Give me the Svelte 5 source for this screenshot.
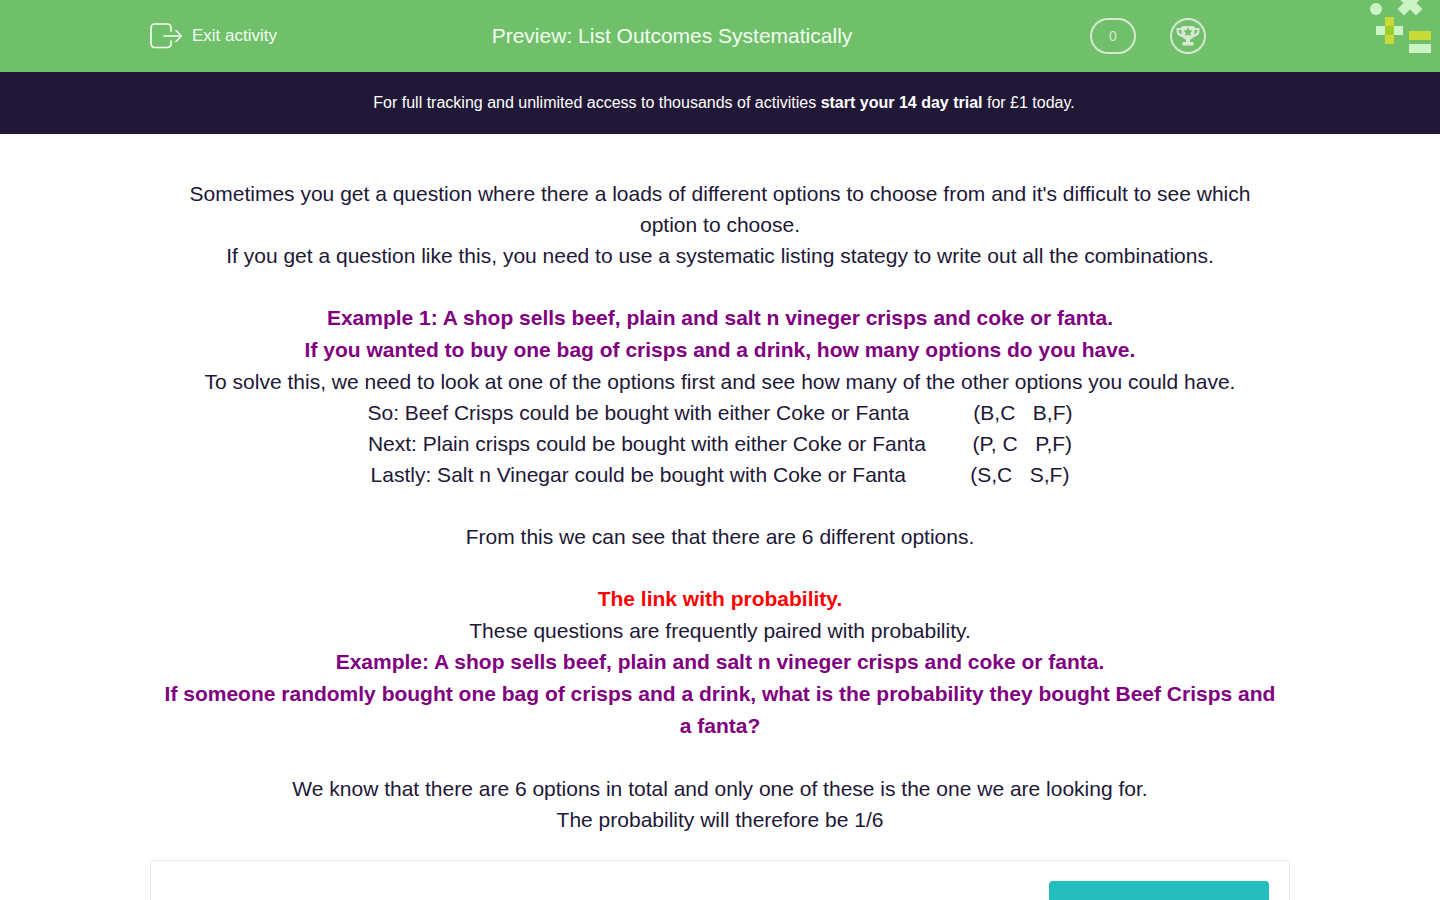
<script>
  const lines = [
    { text: "Sometimes you get a question where there a loads of different options to choose from and it's difficult to see which option to choose." },
    { text: 'If you get a question like this, you need to use a systematic listing stategy to write out all the combinations.' },
    { text: '' },
    { text: 'Example 1: A shop sells beef, plain and salt n vineger crisps and coke or fanta.', kind: 'example' },
    { text: 'If you wanted to buy one bag of crisps and a drink, how many options do you have.', kind: 'example' },
    { text: 'To solve this, we need to look at one of the options first and see how many of the other options you could have.' },
    { text: 'So: Beef Crisps could be bought with either Coke or Fanta           (B,C   B,F)' },
    { text: 'Next: Plain crisps could be bought with either Coke or Fanta        (P, C   P,F)' },
    { text: 'Lastly: Salt n Vinegar could be bought with Coke or Fanta           (S,C   S,F)' },
    { text: '' },
    { text: 'From this we can see that there are 6 different options.' },
    { text: '' },
    { text: 'The link with probability.', kind: 'link' },
    { text: 'These questions are frequently paired with probability.' },
    { text: 'Example: A shop sells beef, plain and salt n vineger crisps and coke or fanta.', kind: 'example' },
    { text: 'If someone randomly bought one bag of crisps and a drink, what is the probability they bought Beef Crisps and a fanta?', kind: 'example' },
    { text: '' },
    { text: 'We know that there are 6 options in total and only one of these is the one we are looking for.' },
    { text: 'The probability will therefore be 1/6' }
  ];
</script>

<header>
  <div class="container bar">
    <a class="exit" href="/activities">
      <svg width="32" height="26" viewBox="0 0 32 26" fill="none" stroke="currentColor" stroke-width="1.7" stroke-linecap="round" stroke-linejoin="round">
        <path d="M21 8V4.500a3.500 3.500 0 0 0-3.500-3.500H4.500A3.500 3.500 0 0 0 1 4.500v16.500A3.500 3.500 0 0 0 4.500 24.500h13a3.500 3.500 0 0 0 3.500-3.500V18" />
        <path d="M14 13h17M26 7.500l5.300 5.500L26 18.500" />
      </svg>
      Exit activity
    </a>
    <h1>Preview: List Outcomes Systematically</h1>
    <div class="stats">
      <span class="score">0</span>
      <button class="trophy" aria-label="Trophies">
        <svg width="24" height="24" viewBox="0 0 24 24">
          <path fill="currentColor" fill-rule="evenodd" d="M5.500 2h13v2h5v2.500c0 3.600-2.300 6-6 6.500-1 1.400-2 2.100-3.500 2.500v2.500h3.500v3.500H6.500V18H10v-2.500C8.500 15.100 7.500 14.400 6.500 13 2.800 12.500.5 10.100.5 6.500V4h5zM5.500 6h-3c.1 2.200 1.200 3.700 3.200 4.300zm13 0-.2 4.300c2-.6 3.100-2.100 3.200-4.300z" />
          <path fill="#70bf6b" d="m12 3.300 1.400 2.900 3.200.4-2.300 2.200.6 3.200-2.900-1.500L9.100 12l.6-3.200-2.300-2.200 3.200-.4z" />
        </svg>
      </button>
    </div>
  </div>
  <svg class="shapes" width="74" height="60" viewBox="0 0 74 60" aria-hidden="true">
    <g fill="#ccf3c4">
      <circle cx="10" cy="9" r="6" />
      <path d="M37.500 3 31.500 9l6.500 6.500L44 9.500l6 6L56.500 9 50.500 3l6-6L50-9.500l-6 6-6-6L31.500-3z" />
      <path d="M10 26h27v9H10zM43 44h22v9H43z" />
    </g>
    <path fill="#c9d935" d="M19 17h9v27h-9zM43 31h22v9H43z" />
    <path fill="#9fcf2c" d="M19 26h9v9h-9z" />
  </svg>
</header>

<p class="trial">
  For full tracking and unlimited access to thousands of activities <a href="/trial">start your 14 day trial</a> for £1 today.
</p>

<main class="container">
  <article>
    {#each lines as line}
      <p class={line.kind}>{line.text}</p>
    {/each}
  </article>
  <section class="card">
    <button class="start" aria-label="Start"></button>
  </section>
</main>

<style>
  :global(body) {
    background: #fff;
    color: #211737;
    font-family: "Liberation Sans", Arial, sans-serif;
  }

  .container {
    max-width: 1140px;
    margin: 0 auto;
  }

  header {
    position: relative;
    background: #70bf6b;
    color: #f3fff0;
  }

  .bar {
    display: grid;
    grid-template-columns: 132px 1fr 228px;
    align-items: center;
    min-height: 72px;
  }

  .exit {
    display: flex;
    align-items: center;
    gap: 10px;
    color: inherit;
    font-size: 17px;
    text-decoration: none;
    white-space: nowrap;
  }

  h1 {
    margin: 0;
    font-size: 21px;
    font-weight: 400;
    text-align: center;
  }

  .stats {
    display: flex;
    gap: 34px;
    padding-left: 28px;
    color: #d9e8d5;
  }

  .score,
  .trophy {
    display: flex;
    align-items: center;
    justify-content: center;
    box-sizing: border-box;
    height: 36px;
    border: 2px solid currentColor;
    border-radius: 18px;
    background: none;
    color: inherit;
  }

  .score {
    width: 46px;
    font-size: 14px;
  }

  .trophy {
    width: 36px;
    padding: 0;
    cursor: pointer;
  }

  .shapes {
    position: absolute;
    top: 0;
    right: 0;
  }

  .trial {
    margin: 0;
    padding: 20px 0 20px 8px;
    background: #211737;
    color: #fff;
    font-size: 16px;
    line-height: 22px;
    text-align: center;
  }

  .trial a {
    color: inherit;
    font-weight: 700;
    text-decoration: none;
  }

  article {
    padding: 44px 10px 25px;
    font-size: 21px;
    line-height: 31px;
    text-align: center;
  }

  article p {
    min-height: 31px;
    margin: 0;
    white-space: pre-wrap;
  }

  .example,
  .link {
    color: #800080;
    font-weight: 700;
    line-height: 32px;
  }

  .link {
    color: #ff0000;
  }

  .card {
    display: flex;
    justify-content: flex-end;
    padding: 20px;
    border: 1px solid #ebebeb;
  }

  .start {
    width: 220px;
    height: 50px;
    border: 0;
    border-radius: 4px;
    background: #23bdbd;
    cursor: pointer;
  }
</style>
